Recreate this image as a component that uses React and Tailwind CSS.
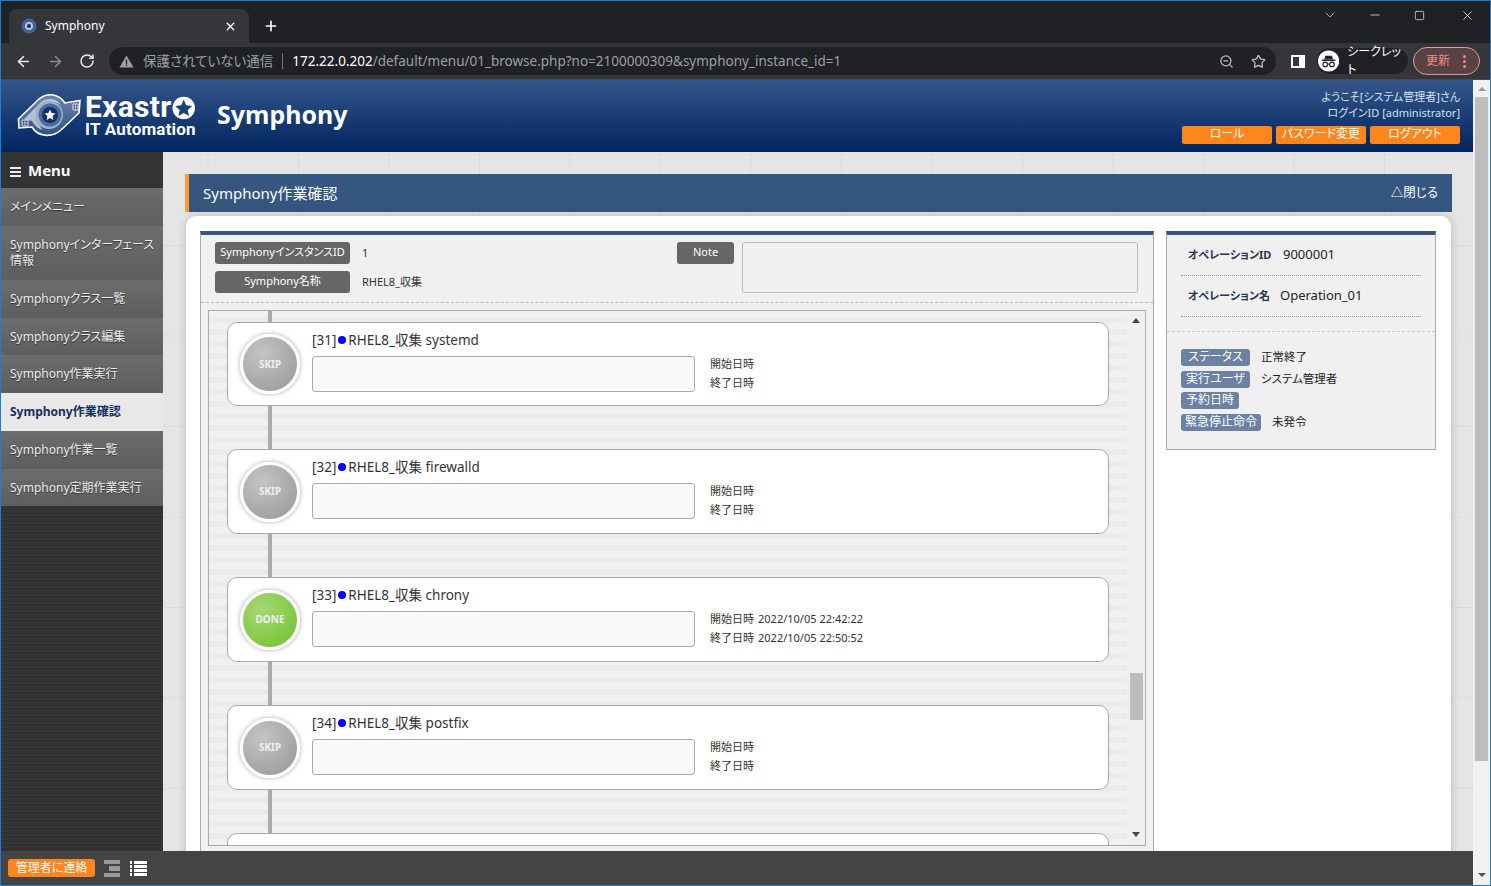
import { ArrowLeft, ArrowRight, RotateCw, ZoomOut, Star, Plus, X, ChevronDown, Minus, Square } from "lucide-react";

const menuItems = [
    { label: "メインメニュー", cls: "h-[38px]" },
    { label: "Symphonyインターフェース情報", cls: "h-[54px]" },
    { label: "Symphonyクラス一覧", cls: "h-[38px]" },
    { label: "Symphonyクラス編集", cls: "h-[37px]" },
    { label: "Symphony作業実行", cls: "h-[38px]" },
    { label: "Symphony作業確認", cls: "h-[38px]", active: true },
    { label: "Symphony作業一覧", cls: "h-[38px]" },
    { label: "Symphony定期作業実行", cls: "h-[37px]" },
];

const movements = [
    { no: 31, name: "systemd", status: "SKIP", cls: "h-[84px]" },
    { no: 32, name: "firewalld", status: "SKIP", cls: "h-[85px]" },
    { no: 33, name: "chrony", status: "DONE", cls: "h-[85px]", start: "2022/10/05 22:42:22", end: "2022/10/05 22:50:52" },
    { no: 34, name: "postfix", status: "SKIP", cls: "h-[85px]" },
];

function IncognitoIcon() {
    return (
        <svg viewBox="0 0 22 22" className="w-[22px] h-[22px]">
            <circle cx="11" cy="11" r="11" fill="#fff" />
            <path d="M7.5 5.5h7l1 4h-9z" fill="#202124" />
            <rect x="4" y="9.5" width="14" height="1.5" fill="#202124" />
            <circle cx="7.5" cy="14.5" r="2.4" fill="none" stroke="#202124" strokeWidth="1.2" />
            <circle cx="14.5" cy="14.5" r="2.4" fill="none" stroke="#202124" strokeWidth="1.2" />
            <path d="M9.8 14.2h2.4" stroke="#202124" strokeWidth="1.1" />
        </svg>
    );
}

function LogoMark() {
    return (
        <svg viewBox="0 0 64 44" className="w-[64px] h-[44px] shrink-0">
            <defs>
                <linearGradient id="eye" x1="0" y1="0" x2="0" y2="1">
                    <stop offset="0" stopColor="#6d86ad" />
                    <stop offset="1" stopColor="#2f4f84" />
                </linearGradient>
            </defs>
            <path d="M1.5 26 L22 6 C31 -1 42 1 48 10 L63 7.5 L62 20 L44 37 C35 45 21 44 15 34 L2 35 Z" fill="url(#eye)" stroke="#fff" strokeWidth="1.6" />
            <path d="M7 26 L24 9 C30 4 40 5 44 12 C36 6 24 10 22 21 C20 28 22 33 26 37 C21 36 17 32 15 28 Z" fill="#d5dce8" opacity="0.75" />
            <circle cx="32" cy="22" r="14" fill="#9fb0ca" />
            <circle cx="33" cy="22" r="11.5" fill="#4c6a9b" />
            <circle cx="33" cy="22" r="8" fill="#12306a" />
            <path d="M33 16.5l1.6 3.6 3.9.4-2.9 2.6.8 3.9-3.4-2-3.4 2 .8-3.9-2.9-2.6 3.9-.4z" fill="#fff" />
            <path d="M5 27h6v6H5zM56 11h5v6h-5z" fill="#2f4f84" stroke="#fff" strokeWidth="0.8" />
            <path d="M8 27v6M5 30h6M58.5 11v6M56 14h5" stroke="#fff" strokeWidth="0.6" />
        </svg>
    );
}

function Movement({ item }) {
    const isDone = item.status === "DONE";
    return (
        <div className={`${item.cls} w-[882px] shrink-0 bg-white border border-[#aaa] rounded-[10px] flex`}>
            <div className="w-[84px] shrink-0 flex items-center justify-center">
                <div
                    className={`w-[60px] h-[60px] rounded-full border-[3px] border-white shadow-[0_0_5px_rgba(0,0,0,0.35)] flex items-center justify-center text-[10px] font-bold text-[#eee] ${
                        isDone
                            ? "bg-[radial-gradient(circle_at_35%_30%,#a6d873,#6fc02e)]"
                            : "bg-[radial-gradient(circle_at_35%_30%,#c4c4c4,#969696)]"
                    }`}
                >
                    {item.status}
                </div>
            </div>
            <div className="flex-1 pt-[7px]">
                <div className="h-[20px] flex items-center text-[13.5px] text-[#333]">
                    <span>[{item.no}]</span>
                    <span className="w-[8px] h-[8px] rounded-full bg-[#0000ff] mx-[2px]" />
                    <span>RHEL8_収集 {item.name}</span>
                </div>
                <div className="flex mt-[6px]">
                    <div className="w-[383px] h-[36px] border border-[#aaa] rounded-[3px] bg-[#fafafa]" />
                    <div className="ml-[15px] text-[11px] text-[#333] leading-[19px] -mt-[2px]">
                        <div className="flex gap-[4px]">
                            <span>開始日時</span>
                            <span>{item.start}</span>
                        </div>
                        <div className="flex gap-[4px]">
                            <span>終了日時</span>
                            <span>{item.end}</span>
                        </div>
                    </div>
                </div>
            </div>
        </div>
    );
}

function StatusRow({ label, value, cls }) {
    return (
        <div className="h-[21.5px] flex items-start">
            <span className={`${cls} h-[17px] rounded-[3px] bg-[#6b82a3] text-white text-[12px] leading-[16px] text-center`}>{label}</span>
            {value && <span className="ml-[11px] text-[11.5px] leading-[16px] text-[#222]">{value}</span>}
        </div>
    );
}

export default function App() {
    return (
        <div className="w-[1491px] h-[886px] overflow-hidden border border-[#1b7fd4] flex flex-col [font-family:'Noto_Sans','Noto_Sans_CJK_JP',sans-serif] [font-feature-settings:'palt']">
            {/* tab strip */}
            <div className="h-[42px] shrink-0 bg-[#202124] flex items-end relative">
                <div className="ml-[8px] w-[240px] h-[34px] bg-[#35363a] rounded-t-[8px] flex items-center px-[12px] text-white text-[12px]">
                    <svg viewBox="0 0 16 16" className="w-[16px] h-[16px] mr-[8px]">
                        <circle cx="8" cy="8" r="7.5" fill="#3f6596" />
                        <circle cx="8" cy="8" r="4" fill="#b5c6dc" />
                        <circle cx="8" cy="8" r="2" fill="#14305f" />
                    </svg>
                    <span className="flex-1">Symphony</span>
                    <X className="w-[13px] h-[13px]" strokeWidth={2.6} />
                </div>
                <Plus className="ml-[14px] mb-[9px] w-[16px] h-[16px] text-white" strokeWidth={2.4} />
                <div className="absolute top-[6px] right-[0px] flex items-center text-white">
                    <ChevronDown className="w-[16px] h-[16px] mr-[30px] text-[#ccc]" strokeWidth={1.2} />
                    <Minus className="w-[14px] h-[14px] mr-[32px]" strokeWidth={1.2} />
                    <Square className="w-[11px] h-[11px] mr-[35px]" strokeWidth={1.4} />
                    <X className="w-[15px] h-[15px] mr-[15px]" strokeWidth={1.2} />
                </div>
            </div>
            {/* toolbar */}
            <div className="h-[37px] shrink-0 bg-[#35363a] border-b border-[#4a4b4f] flex items-center">
                <ArrowLeft className="ml-[14px] w-[17px] h-[17px] text-[#e8eaed]" strokeWidth={2.2} />
                <ArrowRight className="ml-[15px] w-[17px] h-[17px] text-[#8a8b8e]" strokeWidth={2.2} />
                <RotateCw className="ml-[15px] w-[16px] h-[16px] text-[#e8eaed]" strokeWidth={2.2} />
                <div className="ml-[14px] w-[1167px] h-[28px] rounded-full bg-[#202124] flex items-center pl-[10px] text-[13.5px]">
                    <svg viewBox="0 0 16 16" className="w-[15px] h-[15px]">
                        <path d="M8 1.5 15.5 14.5H.5z" fill="#9aa0a6" />
                        <rect x="7.3" y="6" width="1.4" height="4.5" fill="#202124" />
                        <rect x="7.3" y="11.3" width="1.4" height="1.5" fill="#202124" />
                    </svg>
                    <span className="ml-[9px] text-[#9aa0a6]">保護されていない通信</span>
                    <span className="mx-[9px] w-px h-[16px] bg-[#777]" />
                    <span className="text-white">172.22.0.202</span>
                    <span className="text-[#9aa0a6]">/default/menu/01_browse.php?no=2100000309&amp;symphony_instance_id=1</span>
                    <ZoomOut className="ml-auto w-[15px] h-[15px] text-[#bdc1c6]" />
                    <Star className="ml-[17px] mr-[10px] w-[15px] h-[15px] text-[#bdc1c6]" />
                </div>
                <div className="ml-[15px] w-[14px] h-[13px] border-[2px] border-white border-r-[6px]" />
                <div className="ml-[12px] w-[91px] h-[26px] rounded-full bg-[#202124] flex items-center pl-[1px] text-white text-[12px]">
                    <IncognitoIcon />
                    <span className="ml-[8px]">シークレット</span>
                </div>
                <div className="ml-[5px] w-[67px] h-[28px] rounded-full border border-[#e39a92] bg-[#574344] flex items-center pl-[12px] text-[#f28b82] text-[12px]">
                    <span>更新</span>
                    <span className="ml-[13px] flex flex-col gap-[2px]">
                        <span className="w-[3px] h-[3px] rounded-full bg-[#f28b82]" />
                        <span className="w-[3px] h-[3px] rounded-full bg-[#f28b82]" />
                        <span className="w-[3px] h-[3px] rounded-full bg-[#f28b82]" />
                    </span>
                </div>
            </div>
            {/* page */}
            <div className="flex-1 min-h-0 flex">
                <div className="w-[1472px] flex flex-col min-h-0">
                    <header className="h-[72px] shrink-0 bg-[linear-gradient(#34568a,#00245f)] flex items-center">
                        <div className="ml-[16px] flex items-center -mt-[2px]">
                            <LogoMark />
                            <div className="ml-[4px] w-[110px] text-white [font-family:'Roboto',sans-serif] font-bold">
                                <div className="flex items-center h-[28px] text-[30px] leading-[28px] tracking-[0.3px]">
                                    <span>Exastr</span>
                                    <svg viewBox="0 0 24 24" className="w-[24px] h-[24px] mt-[3px]">
                                        <circle cx="12" cy="12" r="11.5" fill="#fff" />
                                        <path d="M12 3.5l2.6 5.7 6.1.7-4.6 4.1 1.3 6.1-5.4-3.1-5.4 3.1 1.3-6.1-4.6-4.1 6.1-.7z" fill="#1c3f78" />
                                    </svg>
                                </div>
                                <div className="text-[17px] leading-[17px] tracking-[0.2px] whitespace-nowrap">IT Automation</div>
                            </div>
                        </div>
                        <div className="ml-[22px] text-[25px] font-bold text-white -mt-[3px]">Symphony</div>
                        <div className="ml-auto mr-[13px] flex flex-col items-end text-[#d5e0ee] text-[11px] leading-[16px] pt-[1px]">
                            <div>ようこそ[システム管理者]さん</div>
                            <div>ログインID [administrator]</div>
                            <div className="flex gap-[4px] mt-[5px]">
                                {["ロール", "パスワード変更", "ログアウト"].map((b) => (
                                    <div key={b} className="w-[90px] h-[18px] rounded-[2px] bg-[#ff851c] text-[#fff] text-[12px] leading-[15px] text-center">{b}</div>
                                ))}
                            </div>
                        </div>
                    </header>
                    <div className="flex-1 min-h-0 flex">
                        <aside className="w-[162px] shrink-0 bg-[repeating-linear-gradient(#303030_0_2px,#363636_2px_4px)] flex flex-col">
                            <div className="h-[36px] bg-[#333] flex items-center pl-[9px] text-white font-bold text-[15px]">
                                <div className="w-[11px] flex flex-col gap-[2px] mr-[7px] mt-[3px]">
                                    <span className="h-[2px] bg-[#eee]" />
                                    <span className="h-[2px] bg-[#eee]" />
                                    <span className="h-[2px] bg-[#eee]" />
                                </div>
                                Menu
                            </div>
                            {menuItems.map((m) => (
                                <div
                                    key={m.label}
                                    className={`${m.cls} flex items-center pl-[9px] pr-[6px] text-[12px] leading-[16px] ${
                                        m.active
                                            ? "bg-[#e8e8e8] text-[#12305f] font-bold"
                                            : "bg-[linear-gradient(#6c6c6c,#5e5e5e)] text-[#eee] [text-shadow:0_1px_1px_rgba(0,0,0,0.5)]"
                                    }`}
                                >
                                    <span>{m.label}</span>
                                </div>
                            ))}
                        </aside>
                        <main className="flex-1 min-w-0 overflow-hidden bg-[#e5e5e5] bg-[linear-gradient(#dcdcdc_1px,transparent_1px),linear-gradient(90deg,#dcdcdc_1px,transparent_1px)] bg-[size:90.5px_90.5px] bg-[position:44.5px_2.5px] pt-[22px] pl-[22px] pr-[21px]">
                            <div className="h-[38px] bg-[#34567f] border-l-[4px] border-[#ff9a2e] flex items-center justify-between pl-[14px] pr-[14px] text-white">
                                <span className="text-[15px]">Symphony作業確認</span>
                                <span className="text-[12.5px]">△閉じる</span>
                            </div>
                            <div className="mt-[4px] ml-px mr-px h-[700px] bg-white rounded-t-[10px] shadow-[0_0_10px_rgba(0,0,0,0.2)] pt-[15px] pl-[14px] pr-[14px] flex gap-[12px] items-start">
                                <section className="w-[954px] h-[680px] shrink-0 border-x border-[#aaa] border-t-[4px] border-t-[#34567f] bg-[#f0f0f0]">
                                    <div className="h-[68px] border-b border-dashed border-[#bbb] pl-[14px] pt-[7px] flex">
                                        <div className="w-[462px] flex flex-col gap-[7px] text-[11px] shrink-0">
                                            <div className="flex items-center">
                                                <span className="w-[135px] h-[22px] rounded-[3px] bg-[#666] text-white text-center leading-[20px]">SymphonyインスタンスID</span>
                                                <span className="ml-[12px] text-[#333]">1</span>
                                            </div>
                                            <div className="flex items-center">
                                                <span className="w-[135px] h-[22px] rounded-[3px] bg-[#666] text-white text-center leading-[20px]">Symphony名称</span>
                                                <span className="ml-[12px] text-[#333]">RHEL8_収集</span>
                                            </div>
                                        </div>
                                        <span className="w-[57px] h-[22px] rounded-[3px] bg-[#666] text-white text-center text-[11px] leading-[20px]">Note</span>
                                        <div className="ml-[8px] w-[396px] h-[51px] border border-[#bbb] rounded-[3px] bg-[#f0f0f0]" />
                                    </div>
                                    <div className="mt-[7px] ml-[7px] w-[938px] h-[536px] border border-[#aaa] bg-[#f0f0f0] flex overflow-hidden">
                                        <div className="w-[918px] shrink-0 bg-[repeating-linear-gradient(#f1f1f1_0_6px,#ebebeb_6px_12px)] pl-[18px] flex flex-col">
                                            <div className="ml-[41px] w-[4px] h-[11px] shrink-0 bg-[#aaa]" />
                                            {movements.map((item) => (
                                                <div key={item.no} className="flex flex-col">
                                                    <Movement item={item} />
                                                    <div className="ml-[41px] w-[4px] h-[43px] shrink-0 bg-[#aaa]" />
                                                </div>
                                            ))}
                                            <div className="w-[882px] h-[40px] shrink-0 bg-white border border-[#aaa] rounded-t-[10px]" />
                                        </div>
                                        <div className="flex-1 flex flex-col items-center relative">
                                            <div className="mt-[7px] w-0 h-0 border-x-[4px] border-x-transparent border-b-[5px] border-b-[#444]" />
                                            <div className="mt-[350px] w-[13px] h-[47px] bg-[#bdbdbd]" />
                                            <div className="mt-[112px] w-0 h-0 border-x-[4px] border-x-transparent border-t-[5px] border-t-[#444]" />
                                        </div>
                                    </div>
                                </section>
                                <section className="w-[270px] h-[219px] shrink-0 border border-[#aaa] border-t-[4px] border-t-[#34567f] bg-[#f0f0f0]">
                                    <div className="h-[97px] border-b border-dashed border-[#ccc] px-[14px]">
                                        <div className="h-[41px] border-b border-dotted border-[#999] flex items-center pl-[7px] text-[#222]">
                                            <span className="w-[95px] text-[11px] font-bold text-[#2a3550]">オペレーションID</span>
                                            <span className="text-[13px]">9000001</span>
                                        </div>
                                        <div className="h-[41px] border-b border-dotted border-[#999] flex items-center pl-[7px] text-[#222]">
                                            <span className="w-[92px] text-[11px] font-bold text-[#2a3550]">オペレーション名</span>
                                            <span className="text-[13px]">Operation_01</span>
                                        </div>
                                    </div>
                                    <div className="pt-[17px] pl-[14px]">
                                        <StatusRow label="ステータス" value="正常終了" cls="w-[69px]" />
                                        <StatusRow label="実行ユーザ" value="システム管理者" cls="w-[69px]" />
                                        <StatusRow label="予約日時" cls="w-[58px]" />
                                        <StatusRow label="緊急停止命令" value="未発令" cls="w-[80px]" />
                                    </div>
                                </section>
                            </div>
                        </main>
                    </div>
                    <footer className="h-[34px] shrink-0 bg-[#444] flex items-center pl-[7px] relative z-10">
                        <div className="w-[87px] h-[18px] rounded-[3px] bg-[#ff851c] text-white text-[12px] leading-[17px] text-center">管理者に連絡</div>
                        <div className="ml-[9px] w-[16px] flex flex-col gap-[2px]">
                            <span className="h-[4px] bg-[#999]" />
                            <span className="h-[5px] bg-[#999] ml-[5px] border-l-[0px]" />
                            <span className="h-[4px] bg-[#999]" />
                        </div>
                        <div className="ml-[10px] w-[17px] flex flex-col gap-[1px]">
                            {[0, 1, 2, 3].map((i) => (
                                <div key={i} className="flex gap-[2px]">
                                    <span className="w-[2px] h-[3px] bg-white" />
                                    <span className="flex-1 h-[3px] bg-white" />
                                </div>
                            ))}
                        </div>
                    </footer>
                </div>
                {/* page scrollbar */}
                <div className="w-[17px] shrink-0 bg-[#f1f1f1] flex flex-col items-center">
                    <div className="mt-[7px] w-0 h-0 border-x-[4px] border-x-transparent border-b-[4px] border-b-[#999]" />
                    <div className="mt-[6px] w-[13px] h-[664px] bg-[#bdbdbd]" />
                    <div className="mt-[112px] w-0 h-0 border-x-[4px] border-x-transparent border-t-[4px] border-t-[#505050]" />
                </div>
            </div>
        </div>
    );
}
